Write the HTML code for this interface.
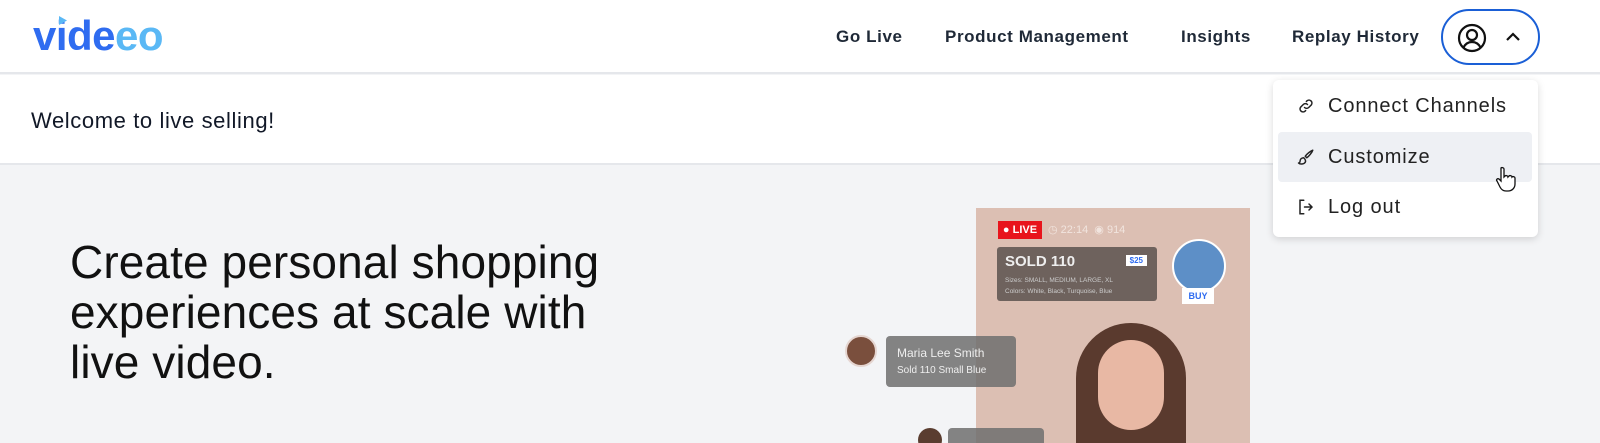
<!DOCTYPE html>
<html><head><meta charset="utf-8"><style>
*{margin:0;padding:0;box-sizing:border-box}
html,body{width:1600px;height:443px;overflow:hidden}
body{background:#f3f4f6;font-family:"Liberation Sans",sans-serif;position:relative;color:#111827}
.hdr{position:absolute;left:0;top:0;width:1600px;height:74px;background:#fff;border-bottom:2px solid #e5e7eb}
.logo{position:absolute;left:33px;top:12px;font-size:42px;font-weight:bold;letter-spacing:-0.5px;color:#2f6cf0}
.nav{position:absolute;top:27px;font-size:17px;font-weight:bold;color:#1f2937;letter-spacing:0.6px;white-space:nowrap}
.pill{position:absolute;left:1441px;top:9px;width:99px;height:56px;border:2px solid #1a5fd6;border-radius:28px;background:#fff}
.wel{position:absolute;left:0;top:75px;width:1600px;height:90px;background:#fff;border-bottom:2px solid #e5e7eb}
.wel span{position:absolute;left:31px;top:33px;font-size:22px;letter-spacing:0.6px;color:#111827}
.hero{position:absolute;left:70px;top:237px;font-size:46px;line-height:50px;color:#111;letter-spacing:0.1px;white-space:nowrap}
.dd{position:absolute;left:1273px;top:80px;width:265px;height:157px;background:#fff;border-radius:6px;box-shadow:0 2px 8px rgba(0,0,0,.15)}
.it{position:absolute;left:55px;font-size:20px;color:#222;letter-spacing:0.9px;white-space:nowrap}
.hl{position:absolute;left:5px;top:52px;width:254px;height:50px;background:#eef0f4;border-radius:4px}
.phone{position:absolute;left:976px;top:208px;width:274px;height:235px;background:#dcbfb3;overflow:hidden}
</style></head><body>
<div class="hdr">
 <div class="logo">vide<span style="color:#5ab8f5">eo</span></div>
 <svg style="position:absolute;left:59px;top:16px" width="8" height="9"><path d="M0 0L8 4.5L0 9Z" fill="#5ab8f5"/></svg>
 <div class="nav" style="left:836px">Go Live</div>
 <div class="nav" style="left:945px">Product Management</div>
 <div class="nav" style="left:1181px">Insights</div>
 <div class="nav" style="left:1292px">Replay History</div>
 <div class="pill">
  <svg style="position:absolute;left:14px;top:12px" width="30" height="30" viewBox="0 0 30 30" fill="none" stroke="#111" stroke-width="2.2"><circle cx="15" cy="15" r="13"/><circle cx="15" cy="12" r="5"/><path d="M6.5 24.5c2-4 5-5.5 8.5-5.5s6.5 1.5 8.5 5.5"/></svg>
  <svg style="position:absolute;left:62px;top:21px" width="16" height="10"><path d="M2 8L8 2L14 8" stroke="#111" stroke-width="2.2" fill="none"/></svg>
 </div>
</div>
<div class="wel"><span>Welcome to live selling!</span></div>
<div class="hero">Create personal shopping<br>experiences at scale with<br>live video.</div>
<div class="phone">
 <div style="position:absolute;left:22px;top:13px;width:44px;height:18px;background:#e8141c;color:#fff;font-size:11px;font-weight:bold;line-height:18px;text-align:center;white-space:nowrap">● LIVE</div>
 <div style="position:absolute;left:72px;top:15px;color:#f1e4de;font-size:11px;white-space:nowrap">◷ 22:14 &nbsp;◉ 914</div>
 <div style="position:absolute;left:21px;top:39px;width:160px;height:54px;background:#6e625d;border-radius:3px;color:#eee">
  <div style="position:absolute;left:8px;top:6px;font-size:15px;font-weight:bold">SOLD 110</div>
  <div style="position:absolute;right:10px;top:8px;background:#fff;color:#2f6cf0;font-size:8px;font-weight:bold;padding:1px 4px">$25</div>
  <div style="position:absolute;left:8px;top:28px;font-size:6.5px;line-height:11px;color:#ccc;white-space:nowrap">Sizes: SMALL, MEDIUM, LARGE, XL<br>Colors: White, Black, Turquoise, Blue</div>
 </div>
 <div style="position:absolute;left:196px;top:31px;width:54px;height:54px;border-radius:50%;background:#5d8fc7;border:2px solid #fff"></div>
 <div style="position:absolute;left:206px;top:80px;width:32px;height:16px;background:#fff;color:#2f6cf0;font-size:9px;font-weight:bold;text-align:center;line-height:16px">BUY</div>
 <div style="position:absolute;left:100px;top:115px;width:110px;height:140px;border-radius:55px 55px 0 0;background:#5a3a2e"></div>
 <div style="position:absolute;left:122px;top:132px;width:66px;height:90px;border-radius:33px;background:#e8b8a4"></div>
</div>
<div style="position:absolute;left:845px;top:335px;width:32px;height:32px;border-radius:50%;background:#7a4f3d;border:2px solid #e5d5d0"></div>
<div style="position:absolute;left:886px;top:336px;width:130px;height:51px;background:rgba(110,110,110,.85);border-radius:4px;color:#eee">
 <div style="position:absolute;left:11px;top:10px;font-size:12px">Maria Lee Smith</div>
 <div style="position:absolute;left:11px;top:29px;font-size:10px">Sold 110 Small Blue</div>
</div>
<div style="position:absolute;left:918px;top:428px;width:24px;height:24px;border-radius:50%;background:#5a3d30"></div>
<div style="position:absolute;left:948px;top:428px;width:96px;height:20px;background:rgba(110,110,110,.85);border-radius:4px"></div>
<div class="dd">
 <div class="hl"></div>
 <svg style="position:absolute;left:24px;top:17px" width="18" height="18" viewBox="0 0 24 24" fill="none" stroke="#222" stroke-width="2" stroke-linecap="round"><path d="M10 14a4 4 0 0 0 5.6 0l3.5-3.5a4 4 0 0 0-5.6-5.6l-1 1"/><path d="M14 10a4 4 0 0 0-5.6 0l-3.5 3.5a4 4 0 0 0 5.6 5.6l1-1"/></svg>
 <div class="it" style="top:15px">Connect Channels</div>
 <svg style="position:absolute;left:24px;top:68px" width="18" height="18" viewBox="0 0 24 24" fill="none" stroke="#222" stroke-width="2" stroke-linejoin="round"><path d="M21 3c-3 1-8 5-10 8l2 2c3-2 7-7 8-10z"/><path d="M9 13c-3 0-5 2-5 5 0 1-1 2-2 2 2 2 7 2 9-1 1-2 0-4-2-6z"/></svg>
 <div class="it" style="top:66px">Customize</div>
 <svg style="position:absolute;left:24px;top:118px" width="18" height="18" viewBox="0 0 24 24" fill="none" stroke="#222" stroke-width="2" stroke-linecap="round"><path d="M9 3H4v18h5"/><path d="M10 12h10M16 8l4 4-4 4"/></svg>
 <div class="it" style="top:116px">Log out</div>
 <svg style="position:absolute;left:222px;top:86px" width="22" height="26" viewBox="0 0 22 26"><path d="M6 2c1-1 3 0 3 1v8l1-1c1-1 3 0 3 1l1-1c1-1 3 0 3 1 1-1 3 0 3 1v6c0 4-3 7-7 7h-2c-3 0-5-2-6-4L2 15c-1-1 0-3 2-2l2 2V3z" fill="#fff" stroke="#111" stroke-width="1.3"/></svg>
</div>
</body></html>
